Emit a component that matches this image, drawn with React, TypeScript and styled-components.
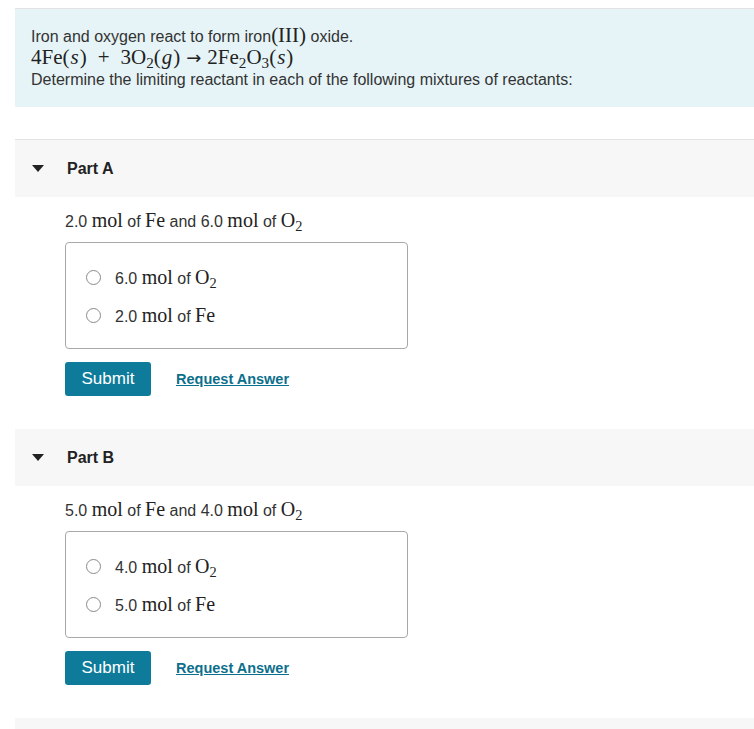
import styled, { createGlobalStyle } from "styled-components"

const GlobalStyle = createGlobalStyle`
  html, body {
    margin: 0;
    padding: 0;
    background: #fff;
    overflow: hidden;
  }
  body {
    font-family: "Liberation Sans", Arial, sans-serif;
    color: #333;
  }
`

const Page = styled.div`
  padding: 8px 0 0 15px;
`
const Intro = styled.div`
  border-top: 1px solid #e2e2e2;
  background-color: #e6f4f7;
  padding: 15px 16px 15px;
  font-size: 16px;
  color: #333;
`
const Line = styled.div<{ $h: number }>`
  height: ${(p) => p.$h}px;
  line-height: ${(p) => p.$h}px;
  white-space: nowrap;
`
const M = styled.span<{ $size?: number }>`
  font-family: "Liberation Serif", "DejaVu Serif", serif;
  font-size: ${(p) => p.$size ?? 20}px;
  color: #222;
`
const I = styled.i`
  font-family: "Liberation Serif", "DejaVu Serif", serif;
  margin: 0 1px;
`
const Sub = styled.sub`
  font-size: 72%;
  vertical-align: -4px;
  line-height: 0;
`
const Op = styled.span`
  margin: 0 11px;
`
const Arrow = styled.span`
  font-family: "DejaVu Sans", sans-serif;
  font-size: 18px;
  margin: 0 6px;
`
const Part = styled.section<{ $topLine?: boolean }>`
  margin-top: 32px;
  border-top: 1px solid ${(p) => (p.$topLine ? "#e2e2e2" : "transparent")};
`
const PartHeader = styled.div`
  height: 57px;
  background-color: #f7f7f7;
  display: flex;
  align-items: center;
  padding-left: 17px;
`
const Caret = styled.span`
  width: 0;
  height: 0;
  border-left: 6px solid transparent;
  border-right: 6px solid transparent;
  border-top: 7px solid #222;
  margin-right: 23px;
`
const PartTitle = styled.h2`
  margin: 0;
  font-size: 16px;
  font-weight: bold;
  color: #222;
`
const PartBody = styled.div`
  padding: 11px 0 0 50px;
`
const Question = styled.p`
  margin: 0;
  font-size: 16px;
  line-height: 24px;
  height: 24px;
  color: #333;
`
const Choices = styled.div`
  margin-top: 10px;
  width: 343px;
  height: 107px;
  box-sizing: border-box;
  border: 1px solid #a8a8a8;
  border-radius: 4px;
  display: flex;
  flex-direction: column;
  padding-top: 15px;
`
const Choice = styled.label`
  display: flex;
  align-items: center;
  height: 38px;
  padding-left: 20px;
  font-size: 16px;
  color: #333;
`
const Radio = styled.span`
  width: 15px;
  height: 15px;
  border-radius: 50%;
  border: 1px solid #8a8a8a;
  background: #fff;
  box-sizing: border-box;
  margin-right: 14px;
`
const Actions = styled.div`
  margin-top: 13px;
  display: flex;
  align-items: center;
  gap: 25px;
`
const SubmitButton = styled.button`
  width: 86px;
  height: 34px;
  border: none;
  border-radius: 3px;
  background-color: #0f7b9a;
  color: #fff;
  font-family: "Liberation Sans", Arial, sans-serif;
  font-size: 17px;
  padding: 0;
`
const RequestLink = styled.a`
  color: #0d6f8c;
  font-weight: bold;
  font-size: 14.5px;
  text-decoration: underline;
`

const Mol = () => <M>mol</M>
const Fe = () => <M>Fe</M>
const O2 = () => (
  <M>
    O<Sub>2</Sub>
  </M>
)

type ChoiceItem = { amount: string; species: "Fe" | "O2" }

const parts: {
  name: string
  fe: string
  o2: string
  choices: ChoiceItem[]
}[] = [
  {
    name: "Part A",
    fe: "2.0",
    o2: "6.0",
    choices: [
      { amount: "6.0", species: "O2" },
      { amount: "2.0", species: "Fe" },
    ],
  },
  {
    name: "Part B",
    fe: "5.0",
    o2: "4.0",
    choices: [
      { amount: "4.0", species: "O2" },
      { amount: "5.0", species: "Fe" },
    ],
  },
]

const App = () => {
  return (
    <Page>
      <GlobalStyle />
      <Intro>
        <Line $h={22}>
          Iron and oxygen react to form iron<M $size={21}>(III)</M> oxide.
        </Line>
        <Line $h={22}>
          <M $size={21}>
            4Fe(<I>s</I>)<Op>+</Op>3O<Sub>2</Sub>(<I>g</I>)<Arrow>→</Arrow>2Fe<Sub>2</Sub>O
            <Sub>3</Sub>(<I>s</I>)
          </M>
        </Line>
        <Line $h={24}>Determine the limiting reactant in each of the following mixtures of reactants:</Line>
      </Intro>

      {parts.map((part, i) => (
        <Part key={part.name} $topLine={i === 0}>
          <PartHeader>
            <Caret />
            <PartTitle>{part.name}</PartTitle>
          </PartHeader>
          <PartBody>
            <Question>
              {part.fe} <Mol /> of <Fe /> and {part.o2} <Mol /> of <O2 />
            </Question>
            <Choices>
              {part.choices.map((c) => (
                <Choice key={c.species}>
                  <Radio />
                  <span>
                    {c.amount} <Mol /> of {c.species === "Fe" ? <Fe /> : <O2 />}
                  </span>
                </Choice>
              ))}
            </Choices>
            <Actions>
              <SubmitButton>Submit</SubmitButton>
              <RequestLink href="#">Request Answer</RequestLink>
            </Actions>
          </PartBody>
        </Part>
      ))}
      <Part>
        <PartHeader />
      </Part>
    </Page>
  )
}

export default App
